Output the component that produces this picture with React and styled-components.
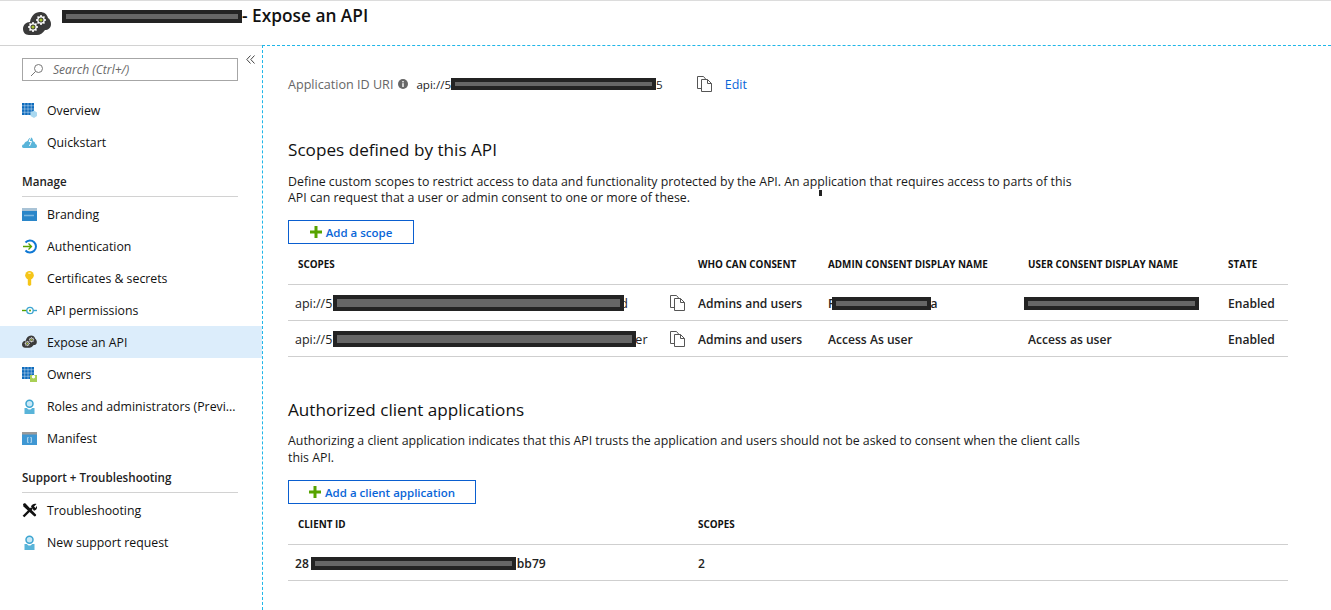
import React from "react";
import styled, { createGlobalStyle } from "styled-components";

const Global = createGlobalStyle`
  html, body { margin: 0; padding: 0; height: 100%; overflow: hidden; background: #fff; }
  body { font-family: "Open Sans", "Noto Sans", "Liberation Sans", sans-serif; color: #1b1b1b; }
  * { box-sizing: border-box; }
`;
const Page = styled.div`width: 1331px; height: 610px; display: flex; flex-direction: column; position: relative;`;
const Header = styled.header`
  height: 45px; flex: none; border-top: 1px solid #dcdcdc;
  display: flex; align-items: flex-start; padding-left: 23px;
`;
const Logo = styled.svg`width: 29px; height: 25px; margin-top: 10px; flex: none;`;
const Title = styled.h1`
  margin: 4px 0 0 10px; font-size: 17.3px; line-height: 22px; font-weight: 600; color: #111;
  display: flex; align-items: center;
`;
const Redact = styled.span`
  display: inline-block; flex: none; width: ${p => p.$w}px; height: ${p => p.$h || 13}px;
  margin-left: ${p => p.$ml || 0}px; margin-right: ${p => p.$mr || 0}px; position: relative; z-index: 1;
  background: #666; border: ${p => p.$b || 4}px solid #232323; vertical-align: middle;
`;
const Body = styled.div`flex: 1; display: flex; min-height: 0;`;
const Side = styled.nav`width: 262px; flex: none; padding-top: 12px; position: relative; border-top: 1px solid #d2d2d2;`;
const SearchBox = styled.div`
  margin-left: 22px; width: 216px; height: 23px; border: 1px solid #a6a6a6;
  display: flex; align-items: center; padding-left: 7px;
  font-size: 12.1px; font-style: italic; color: #6a6a6a; gap: 9px;
`;
const Collapse = styled.svg`position: absolute; left: 246px; top: 9px; width: 9px; height: 9px;`;
const NavList = styled.div`margin-top: 13px; display: flex; flex-direction: column;`;
const NavRow = styled.div`
  height: 32px; padding-left: 22px; display: flex; align-items: center; gap: 10px;
  font-size: 12.3px; color: #111; white-space: nowrap;
  background: ${p => (p.$active ? "#dcedfb" : "transparent")};
`;
const NavIcon = styled.svg`width: 15px; height: 15px; flex: none;`;
const NavGroup = styled.div`
  margin: 14px 24px 1px 22px; height: 25px; border-bottom: 1px solid #d2d2d2;
  font-size: 11.6px; font-weight: 600; line-height: 20px; color: #222;
`;
const Main = styled.main`
  flex: 1; border-left: 1px dashed #1fb6e8; border-top: 1px dashed #1fb6e8;
  padding: 28px 43px 0 25px; min-width: 0; position: relative;
`;
const UriRow = styled.div`height: 20px; display: flex; align-items: center; white-space: nowrap;`;
const UriLabel = styled.span`font-size: 12.6px; color: #666;`;
const Info = styled.svg`width: 10px; height: 10px; margin-left: 5px;`;
const UriValue = styled.span`margin-left: 8px; font-size: 11.6px; color: #222; display: flex; align-items: center;`;
const CopyIcon = styled.svg`width: 15px; height: 16px; flex: none;`;
const UriCopy = styled.span`margin-left: 34px; display: flex;`;
const EditLink = styled.a`margin-left: 13px; font-size: 12.5px; color: #0a66d8;`;
const Section = styled.section`margin-top: ${p => p.$top}px;`;
const Heading = styled.h2`margin: 0; font-size: 17.15px; line-height: 24px; font-weight: 400; color: #111;`;
const Desc = styled.p`margin: ${p => p.$top}px 0 0; font-size: 12.35px; line-height: 16.5px; color: #1a1a1a; white-space: nowrap;`;
const AddButton = styled.button`
  display: flex; align-items: center; justify-content: center; gap: 4px; margin-top: ${p => p.$top}px;
  width: ${p => p.$w}px; height: 24px; border: 1px solid #0a5fd0; background: #fff; padding: 0;
  font-family: inherit; font-size: 11.5px; font-weight: 600; color: #0a66d8;
`;
const Plus = styled.svg`width: 12px; height: 12px;`;
const Grid = styled.div`
  display: grid; grid-template-columns: ${p => p.$cols}; width: 1000px;
`;
const Th = styled.div`
  height: 41px; display: flex; align-items: center; padding-left: ${p => p.$pad || 0}px;
  border-bottom: 1px solid #cfcfcf; font-size: 9.9px; font-weight: 700; color: #111; white-space: nowrap;
`;
const Td = styled.div`
  height: 36px; display: flex; align-items: center; padding: 1px 0 0 ${p => p.$pad || 0}px;
  border-bottom: 1px solid #cfcfcf; font-size: 12.1px; font-weight: 600; color: #222; white-space: nowrap;
`;
const ScopeText = styled.span`font-size: 12.5px; font-weight: 400; display: flex; align-items: center; flex: 1; min-width: 0;`;
const CellCopy = styled.span`margin-right: 13px; display: flex;`;
const Speck = styled.span`position: absolute; left: 556px; top: 144px; width: 3px; height: 6px; background: #222;`;

const Copy = () => (
  <CopyIcon viewBox="0 0 15 16" fill="none" stroke="#555" strokeWidth="1">
    <path d="M4.500 12.500h-4v-12h6l2.500 3" />
    <path d="M4.500 3.500h6l4 4v8h-10zM10.500 3.500v4h4" fill="#fff" />
  </CopyIcon>
);

const Gear = ({ x, y, r, c = "#fff", hub = "#a9c52f" }) => (
  <g transform={`translate(${x} ${y})`}>
    <circle r={r} fill={c} />
    {[0, 45, 90, 135].map(a => (
      <rect key={a} x={-r * 1.3} y={-r * 0.22} width={r * 2.6} height={r * 0.44} fill={c} transform={`rotate(${a})`} />
    ))}
    <circle r={r * 0.66} fill="#3a3a3a" />
    <circle r={r * 0.42} fill={hub} />
  </g>
);
const CloudGears = ({ small }) => (
  <>
    <path d="M6 24C2 24 0 21 0 18c0-4 3-7 7-7C8 5 12 1 17 1c4 0 7 2 8 6 2 1 3 4 3 6 0 4-3 6-6 6-2 3-5 5-8 5z" fill="#3a3a3a" />
    <Gear x={10} y={16} r={3.8} c={small ? "#d8d8d8" : "#fff"} />
    <Gear x={18} y={9} r={3.8} c={small ? "#d8d8d8" : "#fff"} />
  </>
);
const Win = ({ extra }) => (
  <>
    {[0, 1, 2, 3].flatMap(r => [0, 1, 2, 3].map(c => <rect key={`${r}${c}`} x={c * 3.1} y={r * 3.1} width="2.7" height="2.7" fill="#0f6cbd" />))}
    {extra}
  </>
);
const Person = () => (
  <>
    <path d="M2.500 15V9h2.500c.6 1 1.500 1.500 2.500 1.500S9.400 10 10 9h2.500v6z" fill="#59b4d9" />
    <circle cx="7.500" cy="4.800" r="3.500" fill="#c9e8f6" stroke="#3da5d1" strokeWidth="1.500" />
  </>
);

const nav1 = [
  ["Overview", <Win extra={<path d="M8.500 9.500l3.500-2 3 2v3.500l-3 2-3.500-2z" fill="#a9d8f0" />} />],
  ["Quickstart", <><path d="M1.500 13C.5 13 0 12.300 0 11.300 0 10 1 9.300 2 9.300 2.500 7.500 4 6.300 5.500 6 6.500 3.500 8 2.500 9.500 2.500c1 1 1.500 2.500 1.500 3.800 2 .3 2.300 2 2.300 2.700 1 .3 1.700 1.200 1.700 2.300 0 1-.7 1.700-1.500 1.700z" fill="#59b4d9" /><path d="M9 2L7 6.500h2.500L7.500 11" fill="none" stroke="#fff" strokeWidth="1" /></>],
];
const nav2 = [
  ["Branding", <><rect x="0" y="1" width="15" height="3" fill="#a9c3d6" /><rect x="0" y="4" width="15" height="10" fill="#2a86c9" /><path d="M2.500 8.500h10" stroke="#cfe8f7" strokeWidth="1.400" strokeDasharray="1 1" /></>],
  ["Authentication", <><path d="M3.500 3.500a6 6 0 1 1 0 8" fill="none" stroke="#0f78d4" strokeWidth="2" /><path d="M1 7.500h8M6.500 4.500l3 3-3 3" fill="none" stroke="#57a300" strokeWidth="1.300" /></>],
  ["Certificates & secrets", <><circle cx="7.500" cy="4.300" r="4.300" fill="#f5c518" /><path d="M5.800 7h3.400v7l-1.700 1-1.700-1z" fill="#f5c518" /><rect x="6.300" y="1.600" width="2.400" height="1.200" fill="#fff6c7" /></>],
  ["API permissions", <><path d="M0 7.500h7" stroke="#57a300" strokeWidth="1.400" /><circle cx="8" cy="7.500" r="3.200" fill="#fff" stroke="#3da5d1" strokeWidth="1.300" /><circle cx="8" cy="7.500" r="1" fill="#57a300" /><path d="M11 7.500h4" stroke="#3da5d1" strokeWidth="1.400" /></>],
  ["Expose an API", <g transform="scale(.53)"><CloudGears small /></g>, true],
  ["Owners", <Win extra={<><rect x="8" y="8" width="7" height="7" fill="#a9cf55" /><circle cx="11.500" cy="9.800" r="1.700" fill="#fff" /></>} />],
  ["Roles and administrators (Previ...", <Person />],
  ["Manifest", <><rect x="0" y="1" width="15" height="13" fill="#3f97d3" /><rect x="0" y="1" width="15" height="2.500" fill="#9a9a9a" /><path d="M6.500 6.500h-.8v5h.8M8.500 6.500h.8v5h-.8" stroke="#dff1fb" strokeWidth=".8" fill="none" /></>],
];
const nav3 = [
  ["Troubleshooting", <><path d="M1.500 13.500L10 5" stroke="#111" strokeWidth="2.400" /><path d="M9 3.500C10 1 12.500.2 14.500 1l-2.500 2.500 1.500 1.500L15 2.800c.6 2.200-.5 4.300-3 5z" fill="#111" /><path d="M1 1l2-1 11 11.500c.6.900-.9 2.400-1.800 1.800L1.500 3.500z" fill="#111" /></>],
  ["New support request", <Person />],
];
const Rows = ({ items }) => items.map(([label, icon, active]) => (
  <NavRow key={label} $active={active}><NavIcon viewBox="0 0 15 15">{icon}</NavIcon>{label}</NavRow>
));

const PlusIcon = () => <Plus viewBox="0 0 12 12"><path d="M4.500 0h3v4.500H12v3H7.500V12h-3V7.500H0v-3h4.500z" fill="#57a300" /></Plus>;

const scopeCols = "410px 130px 200px 200px 60px";
const clientCols = "410px 590px";

export default function App() {
  return (
    <Page>
      <Global />
      <Header>
        <Logo viewBox="0 0 29 25"><CloudGears /></Logo>
        <Title><Redact $w={180} />- Expose an API</Title>
      </Header>
      <Body>
        <Side>
          <SearchBox>
            <svg width="14" height="14" viewBox="0 0 14 14" fill="none" stroke="#777"><circle cx="8.500" cy="5.500" r="4" /><path d="M5.500 8.500L1 13" /></svg>
            Search (Ctrl+/)
          </SearchBox>
          <Collapse viewBox="0 0 9 9" fill="none" stroke="#444"><path d="M4.500.5L.8 4.500l3.700 4M8.500.5L4.800 4.500l3.700 4" /></Collapse>
          <NavList>
            <Rows items={nav1} />
            <NavGroup>Manage</NavGroup>
            <Rows items={nav2} />
            <NavGroup>Support + Troubleshooting</NavGroup>
            <Rows items={nav3} />
          </NavList>
        </Side>
        <Main>
          <UriRow>
            <UriLabel>Application ID URI</UriLabel>
            <Info viewBox="0 0 10 10"><circle cx="5" cy="5" r="5" fill="#666" /><rect x="4.300" y="4.200" width="1.400" height="3.800" fill="#fff" /><rect x="4.300" y="2" width="1.400" height="1.400" fill="#fff" /></Info>
            <UriValue>api://5<Redact $w={205} $h={12} />5</UriValue>
            <UriCopy><Copy /></UriCopy>
            <EditLink>Edit</EditLink>
          </UriRow>
          <Speck />
          <Section $top={44}>
            <Heading>Scopes defined by this API</Heading>
            <Desc $top={11.5}>Define custom scopes to restrict access to data and functionality protected by the API. An application that requires access to parts of this<br />API can request that a user or admin consent to one or more of these.</Desc>
            <AddButton $w={126} $top={13.5}><PlusIcon />Add a scope</AddButton>
            <Grid $cols={scopeCols}>
              <Th $pad={10}>SCOPES</Th><Th>WHO CAN CONSENT</Th><Th>ADMIN CONSENT DISPLAY NAME</Th><Th>USER CONSENT DISPLAY NAME</Th><Th>STATE</Th>
              <Td $pad={7}><ScopeText>api://5<Redact $w={291} $h={16} $ml={1} $mr={-4} />d</ScopeText><CellCopy><Copy /></CellCopy></Td>
              <Td>Admins and users</Td>
              <Td>P<Redact $w={99} $h={13} $ml={-3} $mr={-1} />a</Td>
              <Td><Redact $w={175} $h={13} $ml={-4} /></Td>
              <Td>Enabled</Td>
              <Td $pad={7}><ScopeText>api://5<Redact $w={303} $h={16} $ml={1} $mr={-1} />er</ScopeText><CellCopy><Copy /></CellCopy></Td>
              <Td>Admins and users</Td>
              <Td>Access As user</Td>
              <Td>Access as user</Td>
              <Td>Enabled</Td>
            </Grid>
          </Section>
          <Section $top={41}>
            <Heading>Authorized client applications</Heading>
            <Desc $top={11}>Authorizing a client application indicates that this API trusts the application and users should not be asked to consent when the client calls<br />this API.</Desc>
            <AddButton $w={188} $top={14}><PlusIcon />Add a client application</AddButton>
            <Grid $cols={clientCols}>
              <Th $pad={10}>CLIENT ID</Th><Th>SCOPES</Th>
              <Td $pad={7}>28<Redact $w={205} $h={13} $ml={2} $mr={1} />bb79</Td>
              <Td>2</Td>
            </Grid>
          </Section>
        </Main>
      </Body>
    </Page>
  );
}
